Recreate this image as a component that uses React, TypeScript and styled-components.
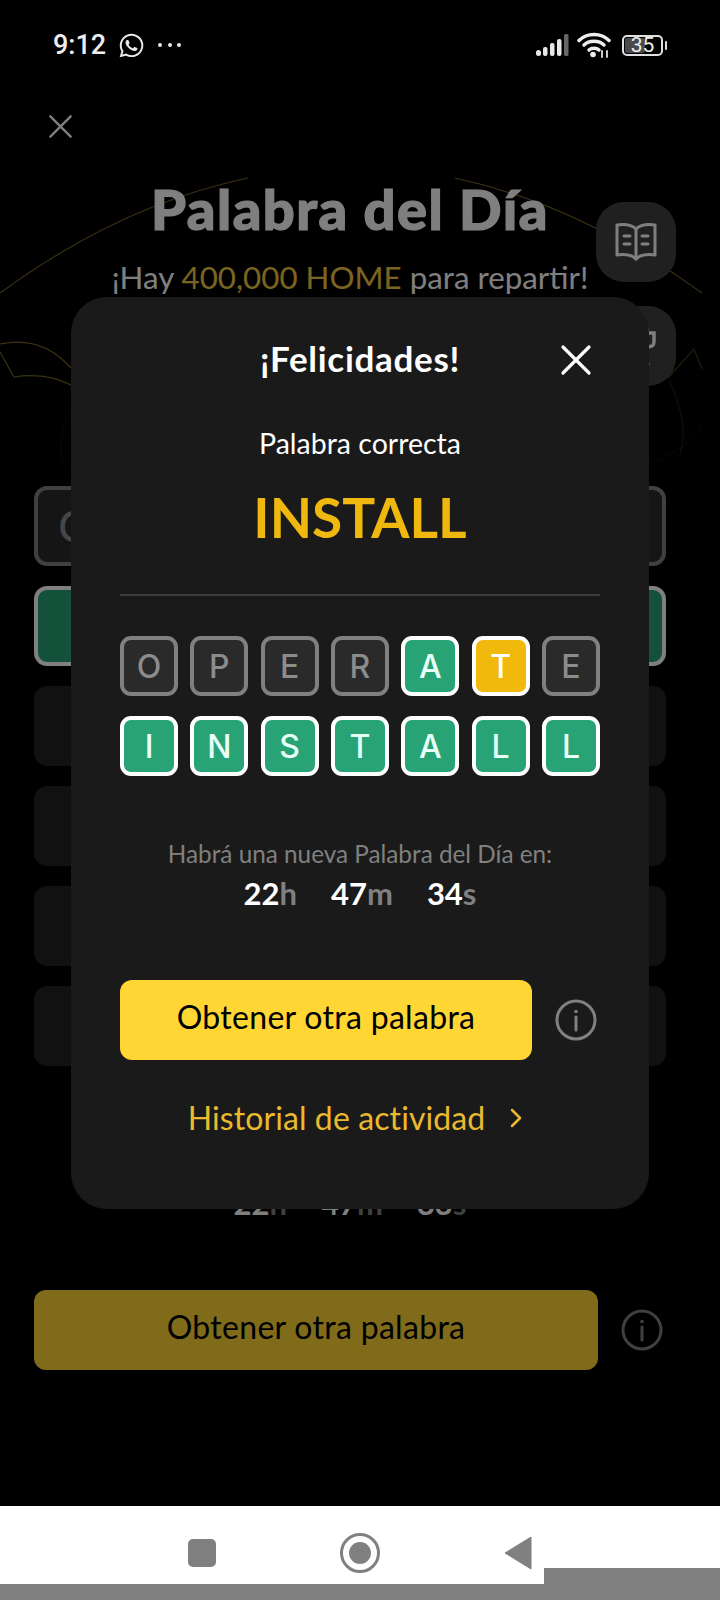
import React from 'react';
import styled, { createGlobalStyle } from 'styled-components';
import { FaWhatsapp } from 'react-icons/fa';

const Global = createGlobalStyle`
  html, body { margin: 0; padding: 0; background: #000; }
  * { box-sizing: border-box; }
`;
const FONT = `Lato, "Open Sans", "Liberation Sans", sans-serif`;

const Screen = styled.div`
  position: relative; width: 720px; height: 1600px; overflow: hidden; background: #000;
  display: flex; flex-direction: column; font-family: ${FONT}; color: #fff;
`;
const StatusBar = styled.div`
  height: 90px; flex: none; display: flex; align-items: center; justify-content: space-between;
  padding: 0 57px 0 53px;
`;
const StatusGroup = styled.div`display: flex; align-items: center;`;
const Clock = styled.span`
  font-family: Roboto, sans-serif; font-size: 27px; font-weight: 500; color: #eee; width: 65px; line-height: 30px;
`;
const Dots = styled.span`
  display: flex; gap: 5.5px; margin-left: 13px;
  i { width: 4px; height: 4px; border-radius: 50%; background: #e8e8e8; display: block; }
`;
const Battery = styled.div`
  position: relative; width: 41px; height: 21px; border: 2px solid #e0e0e0; border-radius: 5px; margin-left: 11px;
  display: flex; align-items: center; justify-content: center; overflow: visible;
  font-family: Roboto, sans-serif; font-size: 21px; line-height: 17px; color: #eee;
  &::before { content: ''; position: absolute; left: 1px; top: 1px; bottom: 1px; width: 20px; background: #4a4a4a; border-radius: 2px; }
  &::after { content: ''; position: absolute; right: -6px; top: 4px; width: 2px; height: 9px; background: #ddd; border-radius: 1px; }
  span { position: relative; }
`;
const Main = styled.div`position: relative; flex: 1; overflow: hidden;`;
const Arcs = styled.svg`position: absolute; left: 0; top: 0; width: 720px; height: 420px;`;
const Page = styled.div`
  position: relative; width: 700px; padding: 24px 34px 0; display: flex; flex-direction: column; align-items: center;
`;
const BackIcon = styled.svg`align-self: flex-start; margin-left: 14px; width: 25px; height: 25px; flex: none;`;
const PageTitle = styled.h1`
  margin: 38px 0 0; font-size: 56px; line-height: 64px; font-weight: 900; color: #fff; white-space: nowrap;
  letter-spacing: 1.5px; -webkit-text-stroke: 1.2px #fff;
`;
const Subtitle = styled.p`
  margin: 16px 0 0; font-size: 31.3px; line-height: 40px; font-weight: 400; color: #fff; white-space: nowrap;
`;
const Gold = styled.span`color: #f5c842;`;
const SideButton = styled.div<{ $top: number }>`
  position: absolute; left: 596px; top: ${p => p.$top}px; width: 80px; height: 80px; border-radius: 28px;
  background: #404040; display: flex; align-items: center; justify-content: center;
`;
const Board = styled.div`
  margin-top: 189px; width: 632px; display: grid; grid-template-columns: repeat(7, 80px); grid-auto-rows: 80px; gap: 20px 12px;
`;
const Tile = styled.div<{ $state: 'empty' | 'miss' | 'hit' | 'near'; $small?: boolean }>`
  width: ${p => (p.$small ? '58px' : '80px')}; height: ${p => (p.$small ? '60px' : '80px')};
  border-radius: ${p => (p.$small ? '11px' : '13px')};
  display: flex; align-items: center; justify-content: center;
  font-family: Inter, ${FONT};
  font-size: ${p => (p.$small ? '32px' : '42px')}; font-weight: 500;
  background: ${p => ({ empty: '#222', miss: '#2a2a2a', hit: '#28a376', near: '#f0b90b' }[p.$state])};
  color: ${p => ({ empty: 'transparent', miss: '#8c8c8c', hit: '#e8fff6', near: '#fff' }[p.$state])};
  border: ${p => {
    if (p.$state === 'empty') return 'none';
    return `4px solid ${p.$state === 'miss' ? '#808080' : '#fff'}`;
  }};
`;
const Countdown = styled.div`margin-top: 83px; font-size: 24.3px; line-height: 30px; color: #808080; white-space: nowrap;`;
const CountdownModal = styled(Countdown)`margin-top: 63px;`;
const Timer = styled.div`
  margin-top: 6px; display: flex; justify-content: center; gap: 34px; line-height: 36px; font-size: 31px; font-weight: 700; color: #fff;
  span span { color: #808080; font-weight: 700; }
`;
const ActionRow = styled.div`margin-top: 69px; display: flex; align-items: center; gap: 23px; width: 100%; padding-right: 3px;`;
const PrimaryButton = styled.div`
  flex: 1; height: 80px; padding-bottom: 7px; border-radius: 12px; background: #ffd633; color: #000;
  display: flex; align-items: center; justify-content: center; font-size: 32px; letter-spacing: 0.3px; font-weight: 400;
`;
const InfoSvg = styled.svg`width: 42px; height: 42px; flex: none;`;
const Scrim = styled.div`position: absolute; inset: 0; background: rgba(0, 0, 0, 0.5);`;
const Modal = styled.div`
  position: absolute; left: 71px; top: 207px; width: 578px; height: 912px; border-radius: 36px; background: #1a1a1a;
  padding: 38px 49px 0 49px; display: flex; flex-direction: column; align-items: center;
`;
const ModalHeader = styled.div`position: relative; width: 100%; text-align: center; font-size: 35px; letter-spacing: 0.7px; line-height: 46px; font-weight: 700;`;
const ModalClose = styled.svg`position: absolute; right: 8px; top: 9px; width: 32px; height: 32px;`;
const CorrectLabel = styled.div`margin-top: 46px; font-size: 28.5px; line-height: 32px; font-weight: 400;`;
const Answer = styled.div`margin-top: 28px; font-size: 55px; line-height: 60px; font-weight: 700; color: #efb80f;`;
const Divider = styled.div`margin-top: 47px; width: 100%; height: 2px; background: #3c3c3c;`;
const TileRow = styled.div`width: 100%; display: flex; justify-content: space-between;`;
const TileStack = styled.div`margin-top: 40px; width: 100%; display: flex; flex-direction: column; gap: 20px;`;
const HistoryLink = styled.div`
  margin-top: 40px; padding-right: 9px; display: flex; align-items: center; gap: 24px; line-height: 36px; font-size: 32px; letter-spacing: 0.1px; color: #eab92e;
`;
const NavBar = styled.div`
  position: relative; height: 94px; flex: none; background: #fff; display: flex; flex-direction: column;
`;
const NavIcons = styled.div`flex: 1; display: flex; align-items: center; justify-content: center; gap: 124px; padding-top: 16px;`;
const NavSquare = styled.div`width: 28px; height: 28px; border-radius: 5px; background: #808080;`;
const NavCircle = styled.div`
  width: 40px; height: 40px; border-radius: 50%; border: 3px solid #808080; display: flex; align-items: center; justify-content: center;
  &::after { content: ''; width: 22px; height: 22px; border-radius: 50%; background: #808080; }
`;
const NavStrip = styled.div`height: 16px; flex: none; background: #808080;`;
const NavCorner = styled.div`position: absolute; right: 0; bottom: 16px; width: 176px; height: 16px; background: #808080;`;

const X = ({ c, w }: { c: string; w: number }) => (
  <path d="M3 3 L29 29 M29 3 L3 29" stroke={c} strokeWidth={w} strokeLinecap="round" fill="none" />
);

const Info = ({ c }: { c: string }) => (
  <InfoSvg viewBox="0 0 42 42" fill="none">
    <circle cx="21" cy="21" r="19" stroke={c} strokeWidth="3" />
    <circle cx="21" cy="12.5" r="1.8" fill={c} />
    <path d="M21 18v13" stroke={c} strokeWidth="3" strokeLinecap="round" />
  </InfoSvg>
);

const TimerRow = ({ h, m, s }: { h: string; m: string; s: string }) => (
  <Timer>
    <span>{h}<span>h</span></span>
    <span>{m}<span>m</span></span>
    <span>{s}<span>s</span></span>
  </Timer>
);

type St = 'empty' | 'miss' | 'hit' | 'near';
const guess: [string, St][] = [['O','miss'],['P','miss'],['E','miss'],['R','miss'],['A','hit'],['T','near'],['E','miss']];
const answer: [string, St][] = ['I','N','S','T','A','L','L'].map(l => [l, 'hit'] as [string, St]);
const emptyRow: [string, St][] = Array.from({ length: 7 }, () => ['', 'empty'] as [string, St]);
// Behind the modal only the first letter of the board can be seen.
const boardGuess: [string, St][] = guess.map(([l, s], i) => [i === 0 ? l : '', s]);
const boardAnswer: [string, St][] = answer.map(([, s]) => ['', s]);

export default function App() {
  return (
    <Screen>
      <Global />
      <StatusBar>
        <StatusGroup>
          <Clock>9:12</Clock>
          <FaWhatsapp size={27} color="#e8e8e8" />
          <Dots><i /><i /><i /></Dots>
        </StatusGroup>
        <StatusGroup>
          <svg width="33" height="22" viewBox="0 0 33 22">
            <g fill="#e8e8e8">
              <rect x="0" y="16" width="5" height="6" rx="2.5" />
              <rect x="7" y="13" width="4.5" height="9" rx="2" />
              <rect x="14" y="9" width="4.5" height="13" rx="2" />
              <rect x="21" y="5" width="4.5" height="17" rx="2" />
            </g>
            <rect x="28" y="0" width="4.5" height="22" rx="1.5" fill="#666" />
          </svg>
          <svg width="34" height="26" viewBox="0 0 34 26" style={{ marginLeft: 8 }} fill="none" stroke="#eee" strokeWidth="3.5" strokeLinecap="round">
            <path d="M2 8.5 C10 0.5 24 0.5 32 8.5" />
            <path d="M7 13 C12 8 22 8 27 13" />
            <path d="M12 18 C14.5 15.5 19.5 15.5 22 18" />
            <circle cx="16" cy="22.5" r="2.8" fill="#eee" stroke="none" />
            <path d="M25 19v6M30 19v6" strokeWidth="2" stroke="#ccc" />
          </svg>
          <Battery><span>35</span></Battery>
        </StatusGroup>
      </StatusBar>
      <Main>
        <Arcs viewBox="0 90 720 420" fill="none">
          <g stroke="#7a6228" strokeWidth="1.2">
            <path d="M0 293 Q120 205 248 178" />
            <path d="M455 178 Q580 205 702 293" />
            <path d="M0 344 Q42 335 71 368" />
            <path d="M0 352 L14 377 Q45 372 71 385" />
            <path d="M668 378 L694 349 L702 369" opacity="0.6" />
            <path d="M669 380 Q690 425 680 455" opacity="0.3" />
            <path d="M702 428 Q680 455 650 462" opacity="0.12" />
            <path d="M71 410 Q55 440 65 470" opacity="0.12" />
          </g>
        </Arcs>
        <Page>
          <BackIcon viewBox="0 0 32 32"><X c="#fff" w={3} /></BackIcon>
          <PageTitle>Palabra del Día</PageTitle>
          <Subtitle>¡Hay <Gold>400,000 HOME</Gold> para repartir!</Subtitle>
          <Board>
            {[boardGuess, boardAnswer, emptyRow, emptyRow, emptyRow, emptyRow].flatMap((row, r) =>
              row.map(([l, s], i) => <Tile key={`${r}-${i}`} $state={s}>{l}</Tile>)
            )}
          </Board>
          <Countdown>Habrá una nueva Palabra del Día en:</Countdown>
          <TimerRow h="22" m="47" s="33" />
          <ActionRow>
            <PrimaryButton>Obtener otra palabra</PrimaryButton>
            <Info c="#808080" />
          </ActionRow>
        </Page>
        <SideButton $top={112}>
          <svg width="44" height="40" viewBox="0 0 44 40" fill="none" stroke="#fff" strokeWidth="3" strokeLinejoin="round" strokeLinecap="round">
            <path d="M22 7 C18 3 11 2 3 3 V33 C11 32 18 33 22 37 C26 33 33 32 41 33 V3 C33 2 26 3 22 7 Z" />
            <path d="M22 7 V37" />
            <path d="M10 14 H16 M10 22 H16 M28 14 H34 M28 22 H34" />
          </svg>
        </SideButton>
        <SideButton $top={216}>
          <svg width="44" height="44" viewBox="0 0 44 44" fill="none" stroke="#fff" strokeWidth="3.5" strokeLinecap="round">
            <path d="M8 6 H33 V22 C33 28 28 31 20 31 C12 31 8 28 8 22 Z" />
            <path d="M33 9 H40 V18 C40 22 36 23 33 23" />
            <path d="M20 31 V38 M12 40 H33" strokeWidth="5" />
          </svg>
        </SideButton>
        <Scrim />
        <Modal>
          <ModalHeader>
            ¡Felicidades!
            <ModalClose viewBox="0 0 32 32"><X c="#fff" w={3.2} /></ModalClose>
          </ModalHeader>
          <CorrectLabel>Palabra correcta</CorrectLabel>
          <Answer>INSTALL</Answer>
          <Divider />
          <TileStack>
            <TileRow>{guess.map(([l, s], i) => <Tile key={i} $small $state={s}>{l}</Tile>)}</TileRow>
            <TileRow>{answer.map(([l, s], i) => <Tile key={i} $small $state={s}>{l}</Tile>)}</TileRow>
          </TileStack>
          <CountdownModal>Habrá una nueva Palabra del Día en:</CountdownModal>
          <TimerRow h="22" m="47" s="34" />
          <ActionRow>
            <PrimaryButton>Obtener otra palabra</PrimaryButton>
            <Info c="#808080" />
          </ActionRow>
          <HistoryLink>
            Historial de actividad
            <svg width="14" height="20" viewBox="0 0 14 20" fill="none" stroke="#eab92e" strokeWidth="2.5" strokeLinecap="round" strokeLinejoin="round">
              <path d="M3 2 L11 10 L3 18" />
            </svg>
          </HistoryLink>
        </Modal>
      </Main>
      <NavBar>
        <NavIcons>
          <NavSquare />
          <NavCircle />
          <svg width="28" height="34" viewBox="0 0 28 34"><path d="M27 1 V33 L1 17 Z" fill="#808080" stroke="#808080" strokeLinejoin="round" /></svg>
        </NavIcons>
        <NavCorner />
        <NavStrip />
      </NavBar>
    </Screen>
  );
}
